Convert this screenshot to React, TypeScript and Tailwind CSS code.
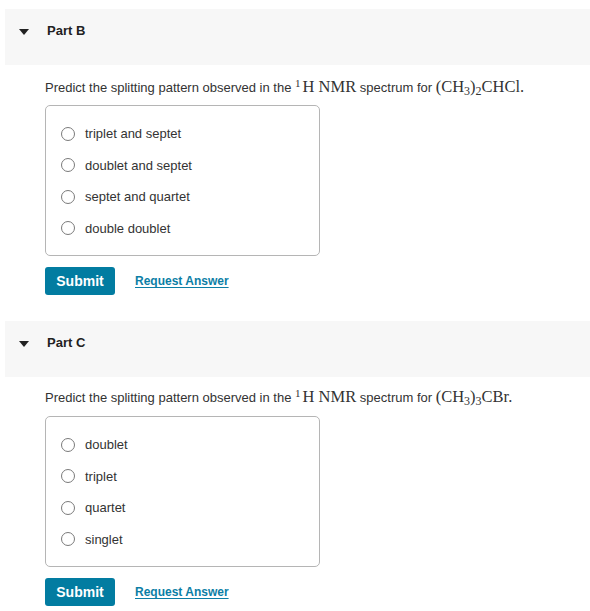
import React from "react";

type Section = {
  part: string;
  formula: React.ReactNode;
  options: string[];
  qTop: string;
  boxTop: string;
};

const Math = ({ children }: { children: React.ReactNode }) => (
  <span className="text-[16.5px]" style={{ fontFamily: '"Liberation Serif", "DejaVu Serif", serif' }}>
    {children}
  </span>
);

function Part({ s }: { s: Section }) {
  return (
    <div>
      <div className="h-[56px] bg-[#f7f7f7] flex items-start pt-[14px]">
        <svg width="10" height="6" viewBox="0 0 10 6" className="ml-[14px] mt-[6px]">
          <path d="M0 0 L10 0 L5 6 Z" fill="#222" />
        </svg>
        <span className="ml-[18px] text-[13px] leading-[16px] font-bold text-[#222]">{s.part}</span>
      </div>
      <div className="pl-[40px]">
        <div className={`${s.qTop} h-[16px] text-[13px] text-[#333] leading-[16px] whitespace-nowrap`}>
          Predict the splitting pattern observed in the{" "}
          <Math>
            <sup className="text-[11px] leading-none mr-[2px]">1</sup>H NMR
          </Math>{" "}
          spectrum for {s.formula}
        </div>
        <div className={`${s.boxTop} w-[275px] border border-[#b5b5b5] rounded-[5px] pt-[12px] pb-[11px]`}>
          {s.options.map((o) => (
            <div key={o} className="h-[31.5px] flex items-center pl-[15px]">
              <span className="w-[14px] h-[14px] rounded-full border border-[#7a7a7a] bg-white shrink-0" />
              <span className="ml-[10px] text-[13px] text-[#333]">{o}</span>
            </div>
          ))}
        </div>
        <div className="mt-[11px] flex items-center">
          <button className="w-[70px] h-[28px] rounded-[3px] bg-[#027ca1] text-white text-[14px] font-bold">
            Submit
          </button>
          <a className="ml-[20px] text-[12px] font-bold text-[#0c7ea5] underline underline-offset-2">
            Request Answer
          </a>
        </div>
      </div>
    </div>
  );
}

export default function App() {
  const sections: Section[] = [
    {
      part: "Part B",
      formula: (
        <Math>
          (CH<sub className="text-[12px] leading-none">3</sub>)<sub className="text-[12px] leading-none">2</sub>CHCl.
        </Math>
      ),
      options: ["triplet and septet", "doublet and septet", "septet and quartet", "double doublet"],
      qTop: "mt-[14px]",
      boxTop: "mt-[10px]",
    },
    {
      part: "Part C",
      formula: (
        <Math>
          (CH<sub className="text-[12px] leading-none">3</sub>)<sub className="text-[12px] leading-none">3</sub>CBr.
        </Math>
      ),
      options: ["doublet", "triplet", "quartet", "singlet"],
      qTop: "mt-[12px]",
      boxTop: "mt-[11px]",
    },
  ];
  return (
    <div
      className="w-[590px] h-[611px] bg-white pt-[9px] pl-[5px] flex flex-col gap-[26px] overflow-hidden"
      style={{ fontFamily: '"Liberation Sans", Arial, sans-serif' }}
    >
      {sections.map((s) => (
        <Part key={s.part} s={s} />
      ))}
    </div>
  );
}
